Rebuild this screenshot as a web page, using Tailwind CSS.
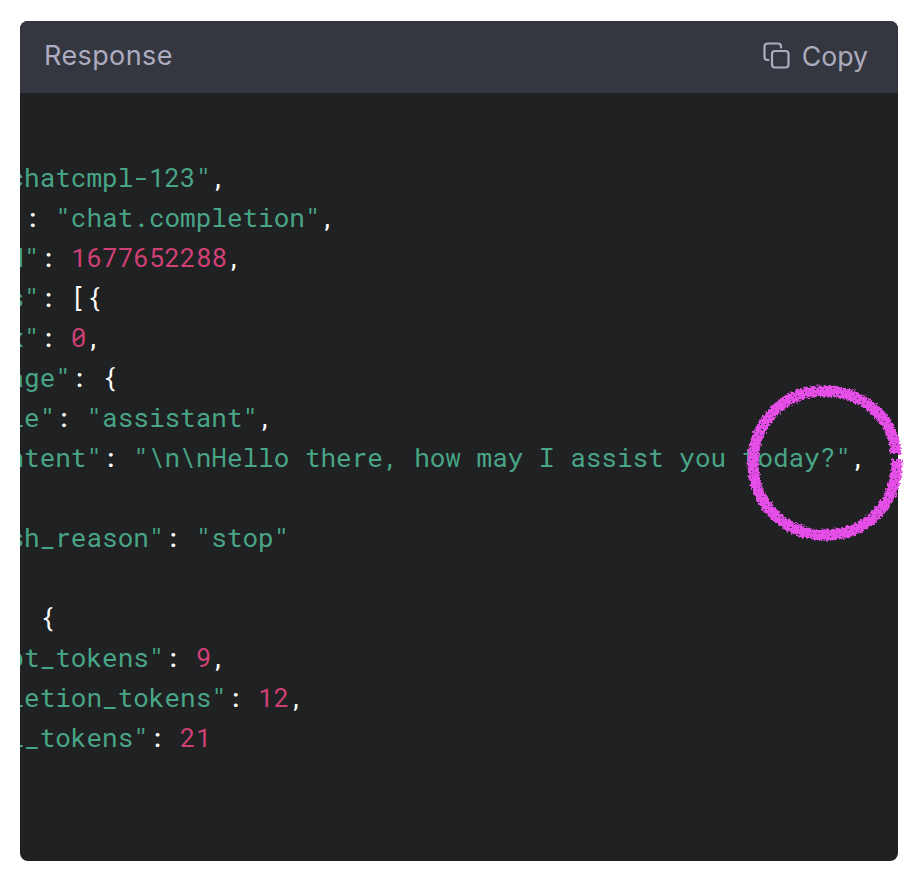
<!doctype html>
<html>
<head>
<meta charset="utf-8">
<script src="https://cdn.jsdelivr.net/npm/@tailwindcss/browser@4"></script>
</head>
<body class="bg-white">
<div class="relative h-[880px] w-[914px] overflow-hidden pt-[21px] pl-5">
  <div class="flex h-[840px] w-[878px] flex-col overflow-hidden rounded-lg bg-[#202123]">
    <div class="flex h-[72px] shrink-0 items-center justify-between bg-[#343740] pr-[30px] pb-[2px] pl-6 font-['Inter',sans-serif] text-[27px] text-[#acacbe]">
      <span class="tracking-[0.4px]">Response</span>
      <span class="flex items-center gap-[12px] text-[26.7px]">
        <svg class="h-[27px] w-[27px]" viewBox="0 0 27 27" fill="none" stroke="currentColor" stroke-width="2.2" stroke-linecap="round" stroke-linejoin="round"><rect x="9" y="9" width="16.5" height="16.5" rx="3"/><path d="M5.5 18H4.5a3 3 0 0 1-3-3V4.5a3 3 0 0 1 3-3H15a3 3 0 0 1 3 3v1"/></svg>
        <span>Copy</span>
      </span>
    </div>
    <pre class="-ml-[152px] pt-6 text-white"><code class="block font-['Roboto_Mono','Liberation_Mono',monospace] text-[26px] leading-[40px]">{
  <span class="text-[#48a585]">"id"</span>: <span class="text-[#48a585]">"chatcmpl-123"</span>,
  <span class="text-[#48a585]">"object"</span>: <span class="text-[#48a585]">"chat.completion"</span>,
  <span class="text-[#48a585]">"created"</span>: <span class="text-[#cf4074]">1677652288</span>,
  <span class="text-[#48a585]">"choices"</span>: [{
    <span class="text-[#48a585]">"index"</span>: <span class="text-[#cf4074]">0</span>,
    <span class="text-[#48a585]">"message"</span>: {
      <span class="text-[#48a585]">"role"</span>: <span class="text-[#48a585]">"assistant"</span>,
      <span class="text-[#48a585]">"content"</span>: <span class="text-[#48a585]">"\n\nHello there, how may I assist you today?"</span>,
    },
    <span class="text-[#48a585]">"finish_reason"</span>: <span class="text-[#48a585]">"stop"</span>
  }],
  <span class="text-[#48a585]">"usage"</span>: {
    <span class="text-[#48a585]">"prompt_tokens"</span>: <span class="text-[#cf4074]">9</span>,
    <span class="text-[#48a585]">"completion_tokens"</span>: <span class="text-[#cf4074]">12</span>,
    <span class="text-[#48a585]">"total_tokens"</span>: <span class="text-[#cf4074]">21</span>
  }
}</code></pre>
  </div>
  <svg class="absolute top-[376px] left-[734px] h-[172px] w-[180px]" viewBox="0 0 180 172" fill="none">
    <defs>
      <filter id="rough" x="-10%" y="-10%" width="120%" height="120%" color-interpolation-filters="sRGB">
        <feTurbulence type="fractalNoise" baseFrequency="0.4" numOctaves="2" seed="4" result="n"/>
        <feDisplacementMap in="SourceGraphic" in2="n" scale="6" xChannelSelector="R" yChannelSelector="G" result="d"/>
        <feTurbulence type="fractalNoise" baseFrequency="0.6" numOctaves="2" seed="9"/>
        <feColorMatrix type="matrix" values="0 0 0 0 0  0 0 0 0 0  0 0 0 0 0  9 0 0 0 -1.9" result="m"/>
        <feComposite in="d" in2="m" operator="in"/>
      </filter>
    </defs>
    <path d="M162 78 C160 41 128 15 89 15 C50 15 19 47 19 87 C19 127 50 159 91 159 C131 159 163 130 163 84" stroke="#e64ee8" stroke-width="11" filter="url(#rough)"/>
  </svg>
</div>
</body>
</html>
